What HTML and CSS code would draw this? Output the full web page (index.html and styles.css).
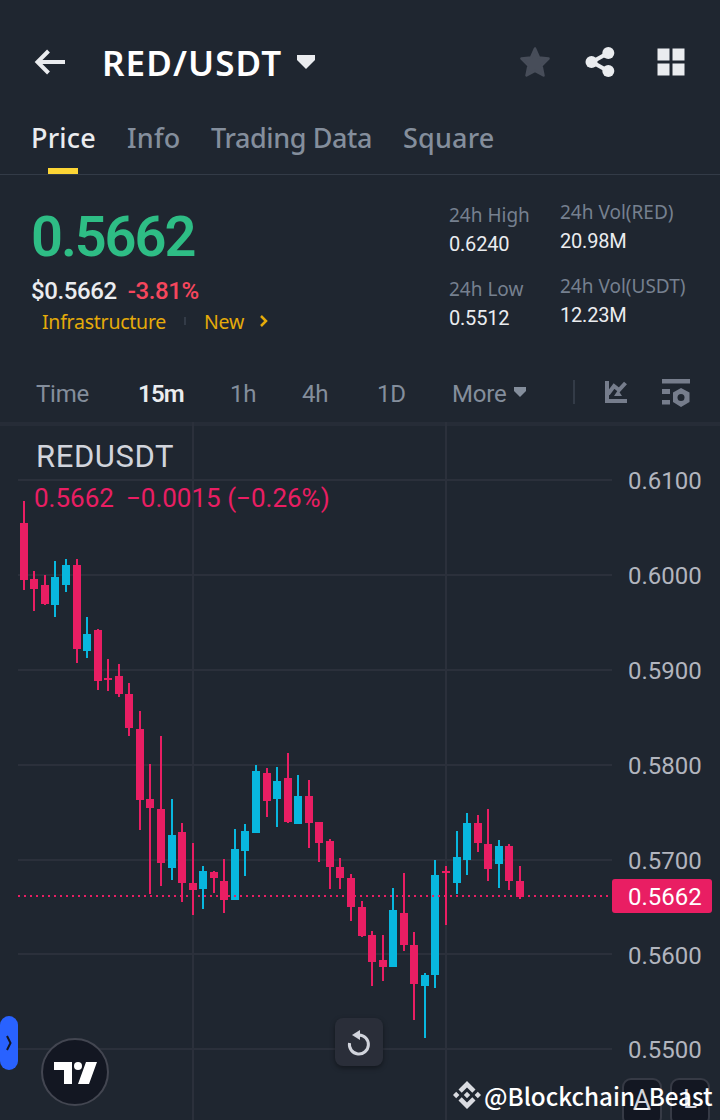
FILE: index.html
```html
<!DOCTYPE html>
<html lang="en">
<head>
    <meta charset="UTF-8">
    <meta name="viewport" content="width=device-width, initial-scale=1.0">
    <title>RED/USDT</title>
    <link rel="stylesheet" href="styles.css">
</head>
<body>
    <header class="topbar">
        <svg class="back" width="32" height="28" viewBox="0 0 32 28">
            <path d="M31 14H4M14.500 3L3.500 14L14.500 25" fill="none" stroke="#eaecef" stroke-width="4"/>
        </svg>
        <h1 class="pair">RED/USDT</h1>
        <svg class="caret" width="18" height="14" viewBox="0 0 18 14"><path d="M0 0H18V5L9 14L0 5Z" fill="#eaecef"/></svg>
        <div class="actions">
            <svg width="30" height="30" viewBox="0 0 30 30"><path d="M15 1.500L19 10.500L28.500 11.500L21.500 18.500L23.500 28.500L15 24L6.500 28.500L8.500 18.500L1.500 11.500L11 10.500Z" fill="#474d59" stroke="#474d59" stroke-width="2.500" stroke-linejoin="round"/></svg>
            <svg width="30" height="30" viewBox="0 0 30 30"><g fill="#eaecef"><circle cx="6.500" cy="15" r="6"/><circle cx="23.300" cy="6" r="6"/><circle cx="23.300" cy="24" r="6"/></g><path d="M23 6L7 15L23 24" fill="none" stroke="#eaecef" stroke-width="4"/></svg>
            <svg width="30" height="30" viewBox="0 0 30 30"><path d="M1.500 1.500h12v12h-12zM16.500 1.500h12v12h-12zM1.500 16.500h12v12h-12zM16.500 16.500h12v12h-12z" fill="#eaecef"/></svg>
        </div>
    </header>

    <nav class="tabs">
        <a class="tab active">Price</a>
        <a class="tab">Info</a>
        <a class="tab tab-data">Trading Data</a>
        <a class="tab">Square</a>
    </nav>

    <section class="ticker">
        <div class="summary">
            <div class="last-price">0.5662</div>
            <div class="fiat"><span class="usd">$0.5662</span><span class="change">-3.81%</span></div>
            <div class="tags">
                <span class="tag-infra">Infrastructure</span>
                <span class="tag-sep"></span>
                <span class="tag-new">New</span>
                <svg width="8" height="12" viewBox="0 0 8 12"><path d="M1 1L6 6L1 11" fill="none" stroke="#e5ab0a" stroke-width="2.500"/></svg>
            </div>
        </div>
        <dl class="stats stats-range">
            <dt>24h High</dt>
            <dd>0.6240</dd>
            <dt>24h Low</dt>
            <dd>0.5512</dd>
        </dl>
        <dl class="stats stats-volume">
            <dt>24h Vol(RED)</dt>
            <dd>20.98M</dd>
            <dt>24h Vol(USDT)</dt>
            <dd>12.23M</dd>
        </dl>
    </section>

    <div class="intervals">
        <span>Time</span>
        <span class="selected">15m</span>
        <span>1h</span>
        <span>4h</span>
        <span>1D</span>
        <span class="more">More <svg width="12" height="10" viewBox="0 0 12 10"><path d="M0 0H12V4L6 10L0 4Z" fill="#848e9c"/></svg></span>
        <i class="divider"></i>
        <svg width="22" height="22" viewBox="0 0 22 22"><path d="M2 0V20H22M3 13L9 5L14 9L20.500 2" fill="none" stroke="#767d8c" stroke-width="4"/><path d="M9 15L13 9L17 15Z" fill="#767d8c"/></svg>
        <svg width="28" height="29" viewBox="0 0 28 29"><path d="M0 1H28V5.500H0ZM0 11H8V16H0ZM0 22H8V26.500H0ZM19 10L27.500 14.500V24L19 29L11 24V14.500Z" fill="#767d8c"/><circle cx="19" cy="19.500" r="3.500" fill="#1f2630"/></svg>
    </div>

    <main class="chart">
        <div class="plot">
            <svg id="candles" width="612" height="698" viewBox="0 422 612 698" shape-rendering="crispEdges"></svg>
            <div class="legend">
                <div class="symbol">REDUSDT</div>
                <div class="delta"><span>0.5662</span><span>−0.0015 (−0.26%)</span></div>
            </div>
            <div class="drawer"><svg width="6" height="16" viewBox="0 0 6 16"><path d="M1 1L4.500 8L1 15" fill="none" stroke="#131722" stroke-width="2"/></svg></div>
            <div class="tv-logo">
                <svg width="44" height="22" viewBox="0 0 44 22"><path d="M0 0H18V22H10V8H0ZM32 0H43L35 22H24Z" fill="#fff"/><circle cx="24" cy="4" r="4" fill="#fff"/></svg>
            </div>
            <div class="reset">
                <svg width="24" height="26" viewBox="0 0 24 26"><path d="M2.500 13A9.500 9.500 0 1 0 12 5" fill="none" stroke="#d1d4dc" stroke-width="3"/><path d="M5 5L13 0V10Z" fill="#d1d4dc"/></svg>
            </div>
        </div>
        <div class="axis">
            <span>0.6100</span>
            <span>0.6000</span>
            <span>0.5900</span>
            <span>0.5800</span>
            <span>0.5700</span>
            <span>0.5600</span>
            <span>0.5500</span>
            <b class="price-tag">0.5662</b>
            <div class="scale-buttons"><span><u>A</u></span><span>L</span></div>
        </div>
        <div class="watermark">
            <svg width="28" height="28" viewBox="0 0 28 28"><path d="M14 0L22.500 8.500L19.300 11.700L14 6.400L8.700 11.700L5.500 8.500ZM14 28L22.500 19.500L19.300 16.300L14 21.600L8.700 16.300L5.500 19.500ZM14 10.800L17.200 14L14 17.200L10.800 14ZM3.200 10.800L6.400 14L3.200 17.200L0 14ZM24.800 10.800L28 14L24.800 17.200L21.600 14Z" fill="#d9dbe0"/></svg>
            <span>@Blockchain_Beast</span>
        </div>
    </main>
    <script src="chart.js"></script>
</body>
</html>
```
FILE: styles.css
```css
* {
    margin: 0;
    padding: 0;
    box-sizing: border-box;
}

body {
    width: 720px;
    height: 1120px;
    overflow: hidden;
    background-color: #1f2630;
    color: #eaecef;
    font-family: "Noto Sans", sans-serif;
}

svg {
    display: block;
    flex: none;
}

/* Top bar */
.topbar {
    display: flex;
    align-items: center;
    height: 124px;
    padding: 0 34px 0 34px;
}

.pair {
    width: 193px;
    margin-left: 36px;
    padding-top: 1px;
    font-size: 35px;
    font-weight: 600;
    line-height: 40px;
    letter-spacing: 1.1px;
    color: #fff;
    white-space: nowrap;
}

.caret {
    margin-left: 2px;
}

.actions {
    display: flex;
    gap: 35px;
    margin-left: auto;
}

.actions svg:last-child {
    margin-left: 6px;
}

/* Tabs */
.tabs {
    display: grid;
    grid-template-columns: 96px 84px 192px 120px;
    height: 51px;
    padding-left: 31px;
    border-bottom: 1px solid #333b47;
    font-size: 27px;
    font-weight: 500;
    line-height: 27px;
    letter-spacing: 0.2px;
    color: #848e9c;
    white-space: nowrap;
}

.tab-data {
    letter-spacing: -0.4px;
}

.tab.active {
    color: #eaecef;
}

.tab.active::after {
    content: "";
    display: block;
    width: 30px;
    height: 6px;
    margin: 17px 0 0 17px;
    background-color: #fcd535;
}

/* Ticker */
.ticker {
    display: flex;
    height: 187px;
    padding-left: 31px;
    white-space: nowrap;
}

.summary {
    width: 418px;
    padding-top: 31px;
    font-family: Roboto, sans-serif;
}

.last-price {
    font-size: 56px;
    font-weight: 600;
    line-height: 62px;
    letter-spacing: -2.1px;
    color: #2ebd85;
}

.fiat {
    display: flex;
    gap: 11px;
    padding-top: 9px;
    font-size: 24px;
    font-weight: 500;
    line-height: 28px;
    letter-spacing: -0.4px;
}

.change {
    color: #f6465d;
}

.tags {
    display: flex;
    align-items: center;
    height: 32px;
    padding-left: 11px;
    font-family: "Noto Sans", sans-serif;
    font-size: 19.5px;
    letter-spacing: -0.25px;
    color: #e5ab0a;
}

.tag-infra {
    width: 142px;
}

.tag-sep {
    width: 2px;
    height: 8px;
    margin-right: 18px;
    background-color: #333b47;
}

.tag-new {
    width: 56px;
}

.stats {
    font-size: 19px;
    line-height: 30px;
    color: #76808f;
}

.stats-range {
    width: 111px;
    padding-top: 25px;
}

.stats-volume {
    padding-top: 22px;
}

.stats dd {
    height: 44px;
    line-height: 29px;
    font-family: Roboto, sans-serif;
    font-size: 20px;
    letter-spacing: -0.2px;
    color: #eaecef;
}

/* Intervals */
.intervals {
    display: grid;
    grid-template-columns: 102px 92px 72px 75px 75px 121px 32px 57px 28px;
    align-items: center;
    height: 60px;
    padding-left: 36px;
    font-family: Roboto, sans-serif;
    font-size: 24px;
    color: #848e9c;
}

.intervals span {
    padding-top: 3px;
    letter-spacing: -0.2px;
}

.intervals .selected {
    font-weight: 600;
    letter-spacing: -0.8px;
    color: #eaecef;
}

.more {
    display: flex;
    align-items: center;
    gap: 8px;
}

.more svg {
    margin-top: -3px;
}

.divider {
    width: 2px;
    height: 24px;
    background-color: #333b47;
}

/* Chart */
.chart {
    position: relative;
    display: flex;
    height: 698px;
    border-top: 4px solid #262c37;
    font-family: Roboto, sans-serif;
}

.plot {
    width: 612px;
    margin-top: -4px;
}

.legend {
    position: absolute;
    top: 13px;
    left: 34px;
}

.symbol {
    padding-left: 2px;
    font-size: 31px;
    line-height: 36px;
    letter-spacing: 0.6px;
    color: #d1d4dc;
}

.delta {
    display: flex;
    gap: 12px;
    padding-top: 7px;
    font-size: 26px;
    line-height: 32px;
    color: #e91e63;
}

.axis {
    width: 108px;
    padding: 8px 0 0 16px;
    font-size: 24px;
    color: #b2b5be;
}

.axis > span {
    display: flex;
    align-items: center;
    height: 94.85px;
}

.price-tag {
    position: absolute;
    top: 453px;
    left: 612px;
    width: 100px;
    height: 34px;
    padding: 1px 0 0 16px;
    border-radius: 3px;
    background-color: #e91e63;
    font-weight: 400;
    line-height: 34px;
    color: #fff;
}

.drawer {
    position: absolute;
    top: 590px;
    left: 0;
    width: 18px;
    height: 54px;
    padding: 19px 0 0 6px;
    border-radius: 9px;
    background-color: #2962ff;
}

.tv-logo {
    position: absolute;
    top: 612px;
    left: 41px;
    width: 68px;
    height: 68px;
    padding: 22px 0 0 11px;
    border: 2px solid #434651;
    border-radius: 50%;
    background-color: #131722;
}

.reset {
    position: absolute;
    top: 592px;
    left: 335px;
    width: 48px;
    height: 48px;
    padding: 12px;
    border-radius: 8px;
    background-color: #2a2e39;
    box-shadow: 0 2px 5px rgba(0, 0, 0, 0.4);
}

.scale-buttons {
    position: absolute;
    top: 652px;
    left: 622px;
    display: flex;
    gap: 8px;
}

.scale-buttons span {
    width: 40px;
    height: 48px;
    border: 2px solid #363a45;
    border-radius: 9px;
    background-color: #131722;
    font-size: 26px;
    line-height: 38px;
    text-align: center;
    color: #d1d4dc;
}

.scale-buttons u {
    text-underline-offset: 0;
}

/* Watermark */
.watermark {
    position: absolute;
    top: 649px;
    left: 453px;
    display: flex;
    align-items: center;
    gap: 3px;
    height: 40px;
    font-family: "Noto Sans CJK SC", sans-serif;
    font-size: 24.2px;
    font-weight: 500;
    color: #fff;
    white-space: nowrap;
}
```
FILE: chart.js
```js
// left, high, open/close top, open/close bottom, low, direction
const candles = [
    [20, 501, 523, 580, 590, 0], [30, 571, 579, 589, 611, 0], [41, 575, 585, 604, 605, 0],
    [51, 561, 577, 605, 617, 1], [62, 559, 565, 585, 592, 1], [73, 559, 565, 649, 663, 0],
    [83, 617, 634, 651, 658, 1], [94, 629, 630, 681, 690, 0], [104, 659, 678, 680, 691, 0],
    [115, 664, 676, 694, 697, 0], [125, 683, 694, 728, 736, 0], [136, 711, 729, 800, 830, 0],
    [146, 764, 799, 808, 894, 0], [157, 736, 809, 863, 886, 0], [168, 799, 835, 868, 880, 1],
    [178, 823, 832, 883, 902, 0], [189, 843, 883, 890, 915, 0], [199, 866, 871, 889, 909, 1],
    [210, 871, 872, 878, 893, 0], [220, 859, 881, 900, 913, 0], [231, 829, 849, 900, 900, 1],
    [241, 824, 831, 851, 876, 1], [252, 765, 771, 833, 833, 1], [263, 768, 773, 801, 817, 0],
    [273, 767, 781, 799, 827, 1], [284, 753, 778, 822, 823, 0], [294, 775, 796, 824, 824, 1],
    [305, 780, 796, 823, 848, 0], [315, 822, 822, 843, 862, 0], [326, 839, 841, 867, 889, 0],
    [336, 858, 867, 878, 889, 0], [347, 874, 878, 907, 921, 0], [358, 901, 907, 936, 937, 0],
    [368, 931, 935, 962, 986, 0], [379, 935, 960, 967, 981, 0], [389, 888, 910, 967, 967, 1],
    [400, 873, 913, 945, 951, 0], [410, 932, 945, 984, 1020, 0], [421, 973, 975, 986, 1038, 1],
    [431, 860, 875, 975, 988, 1], [442, 866, 871, 873, 925, 0], [453, 831, 857, 883, 894, 1],
    [463, 813, 823, 860, 875, 1], [474, 815, 823, 843, 852, 0], [484, 809, 844, 869, 881, 0],
    [495, 840, 846, 864, 888, 1], [505, 844, 846, 881, 890, 0], [516, 866, 881, 897, 899, 0]
];

const rect = (x, y, w, h, fill) => `<rect x="${x}" y="${y}" width="${w}" height="${h}" fill="${fill}"/>`;

let out = '';
for (const y of [479, 574, 669, 764, 859, 953, 1048]) {
    out += rect(18, y, 594, 2, '#2b303b');
}
for (const x of [192, 445]) {
    out += rect(x, 422, 2, 698, '#2b303b');
}
for (const [x, high, top, bottom, low, up] of candles) {
    const color = up ? '#08b7de' : '#e91e63';
    out += rect(x + 3, high, 2, low - high, color) + rect(x, top, 8, bottom - top, color);
}
// last price line
out += '<path d="M18 896H612" stroke="#e91e63" stroke-width="2" stroke-dasharray="2 4"/>';

document.getElementById('candles').innerHTML = out;
```
